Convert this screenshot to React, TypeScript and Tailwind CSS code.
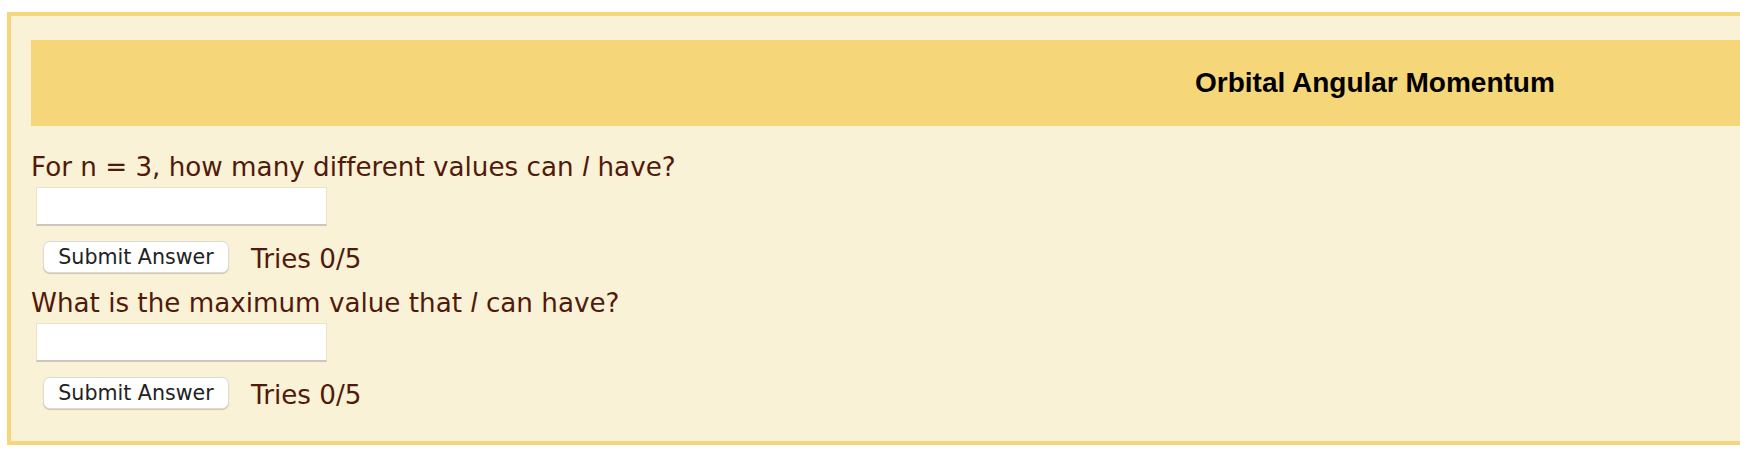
import React from "react";

const questions = [
  { id: 1, before: "For n = 3, how many different values can ", after: " have?" },
  { id: 2, before: "What is the maximum value that ", after: " can have?" },
];

function Question({ before, after }: { before: string; after: string }) {
  return (
    <div className="flex flex-col">
      <p className="h-[30px] text-[26.2px] leading-[30px] text-[#521a0a] whitespace-nowrap">
        {before}
        <i>l</i>
        {after}
      </p>
      <input
        type="text"
        className="ml-[5px] mt-[5px] h-[39px] w-[291px] bg-white border border-[#ece4c8] border-b-2 border-b-[#c9c6bd] outline-none"
      />
      <div className="mt-[15px] flex items-start gap-[22px] pl-[12px]">
        <button className="h-[32px] w-[186px] rounded-[7px] bg-white border border-[#dcdad4] shadow-[0_1px_1px_rgba(0,0,0,0.18)] text-[20.6px] text-[#222] leading-none">
          Submit Answer
        </button>
        <span className="mt-[3px] h-[30px] text-[26.2px] leading-[30px] text-[#521a0a]">Tries 0/5</span>
      </div>
    </div>
  );
}

export default function App() {
  return (
    <div className="w-[1740px] h-[458px] overflow-hidden bg-white pt-[12px] pl-[7px] font-['DejaVu_Sans',Verdana,sans-serif] [font-variant-ligatures:none]">
      <div className="w-[2700px] border-4 border-[#f5d67a] bg-[#faf2d7] px-[20px] pt-[24px] pb-[31px]">
        <div className="flex h-[86px] items-center bg-[#f5d679] pl-[1164px]">
          <h2 className="font-['Liberation_Sans',Arial,sans-serif] text-[28px] font-bold text-black">
            Orbital Angular Momentum
          </h2>
        </div>
        <div className="mt-[26px] flex flex-col gap-[14px]">
          {questions.map((q) => (
            <Question key={q.id} before={q.before} after={q.after} />
          ))}
        </div>
      </div>
    </div>
  );
}
